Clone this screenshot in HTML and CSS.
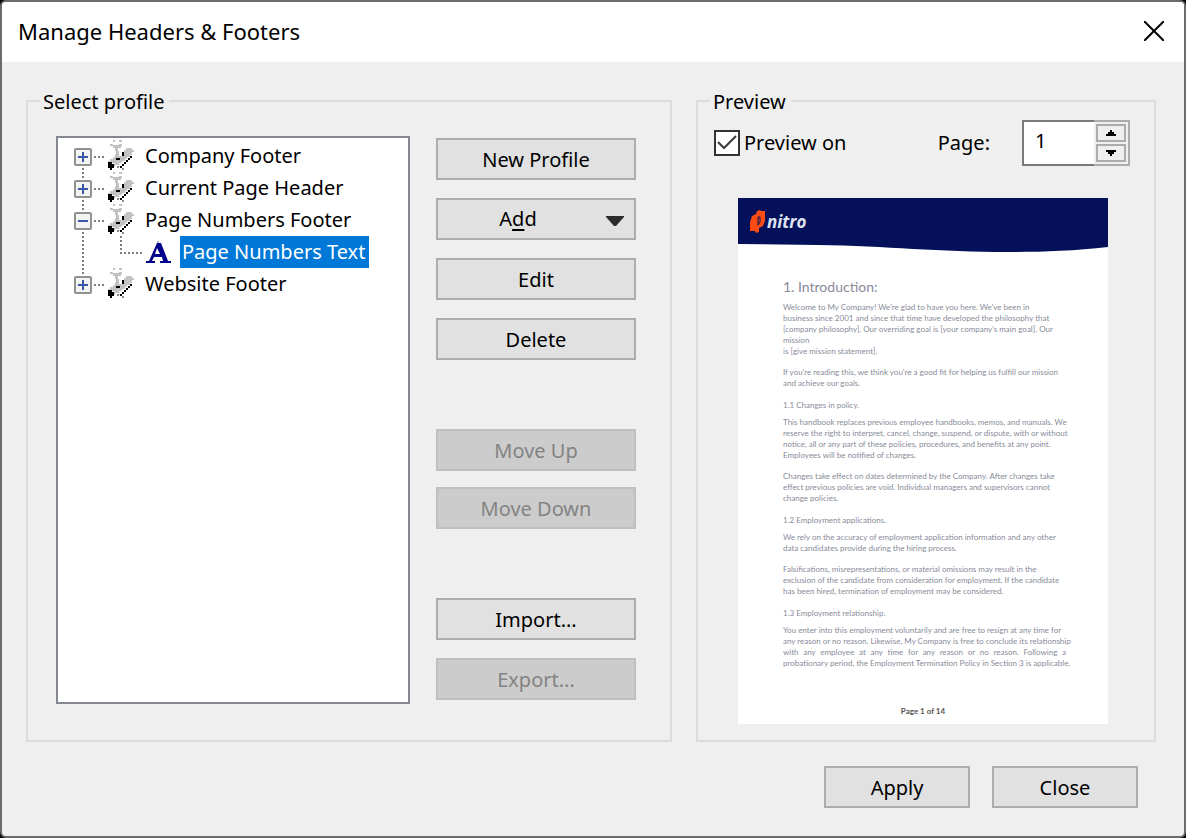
FILE: index.html
```html
<!DOCTYPE html>
<html lang="en">
<head>
<meta charset="utf-8">
<title>Manage Headers &amp; Footers</title>
<link rel="stylesheet" href="styles.css">
</head>
<body>
<svg class="defs" aria-hidden="true">
  <symbol id="stamp" viewBox="0 0 28 32">
    <path fill="#c2c2c2" d="M7 0h2v2H7zM13 0h3v2h-3zM4 4h3v1h6V4h3v2h-1v2h-3v3h1v5h3v-3h2v-3h2V8h6v2h2v2h-2v3h-2v2h-3v2h-2v2h-3v2h-3v2H9v2H8v-4H2v-2h2v-2h3v-2h2v-3h1v-3H9V8H7V6H4z"/>
    <path fill="#8a8a8a" d="M11 26h2v2h-2zM16 28h2v2h-2zM4 28h2v2H4z"/>
    <path fill="#000" d="M16 12h2v4h-2zM10 18h4v2h-4zM2 22h4v2h2v4H6v2H4v-2H2zM24 16h2v2h-2zM22 18h2v2h-2zM20 20h2v2h-2zM18 22h2v2h-2zM16 24h2v2h-2zM14 26h2v2h-2z"/>
  </symbol>
  <symbol id="box" viewBox="0 0 40 32">
    <path class="dots" d="M28 17h12"/>
    <rect x="9" y="9" width="16" height="16" rx="1" fill="#f3f3f3" stroke="#919191" stroke-width="2"/>
    <path d="M12 17h10" stroke="#3b57a5" stroke-width="2"/>
  </symbol>
</svg>
<div class="window">
  <header class="titlebar">
    <h1>Manage Headers &amp; Footers</h1>
    <button class="close" aria-label="Close window">
      <svg width="20" height="20" viewBox="0 0 20 20"><path d="M0 0l20 20M20 0L0 20" stroke="#000" stroke-width="2"/></svg>
    </button>
  </header>
  <main>
    <fieldset class="profiles">
      <legend>Select profile</legend>
      <div class="profile-body">
        <ul class="tree" role="tree">
          <li role="treeitem"><div class="row">
            <button class="toggle" aria-label="Expand Company Footer"><svg width="40" height="32"><path class="dots" d="M17 28v4"/><use href="#box"/><path d="M17 12v10" stroke="#3b57a5" stroke-width="2"/></svg></button>
            <svg class="stamp"><use href="#stamp"/></svg><span>Company Footer</span></div></li>
          <li role="treeitem"><div class="row">
            <button class="toggle" aria-label="Expand Current Page Header"><svg width="40" height="32"><path class="dots" d="M17 0v8M17 28v4"/><use href="#box"/><path d="M17 12v10" stroke="#3b57a5" stroke-width="2"/></svg></button>
            <svg class="stamp"><use href="#stamp"/></svg><span>Current Page Header</span></div></li>
          <li role="treeitem"><div class="row">
            <button class="toggle" aria-label="Collapse Page Numbers Footer"><svg width="40" height="32"><path class="dots" d="M17 0v8M17 28v4"/><use href="#box"/></svg></button>
            <svg class="stamp"><use href="#stamp"/></svg><span>Page Numbers Footer</span></div>
            <ul role="group">
              <li role="treeitem" aria-selected="true"><div class="row">
                <svg class="branch" width="78" height="32"><path class="dots" d="M17 0v32M55 0v16M54 17h24"/></svg>
                <svg class="letter" width="28" height="32" viewBox="0 0 28 32"><path fill="#00008b" d="M13 7h4l7 18h3v2H16v-2h3l-1-4h-8l-2 4h3v2H2v-2h3zM13 12l-2 6h5z" fill-rule="evenodd"/><path fill="#b4b4c4" d="M13 5h2v2h-2z"/></svg>
                <span class="selected">Page Numbers Text</span></div></li>
            </ul></li>
          <li role="treeitem"><div class="row">
            <button class="toggle" aria-label="Expand Website Footer"><svg width="40" height="32"><path class="dots" d="M17 0v8"/><use href="#box"/><path d="M17 12v10" stroke="#3b57a5" stroke-width="2"/></svg></button>
            <svg class="stamp"><use href="#stamp"/></svg><span>Website Footer</span></div></li>
        </ul>
        <div class="actions">
          <div class="group">
            <button class="btn">New Profile</button>
            <button class="btn add"><span>A<u>d</u>d</span><svg width="18" height="14" viewBox="0 0 18 14"><path d="M0 4h18v1l-8 9H8L0 5z" fill="#2b2b2b"/></svg></button>
            <button class="btn">Edit</button>
            <button class="btn">Delete</button>
          </div>
          <div class="group move">
            <button class="btn" disabled>Move Up</button>
            <button class="btn" disabled>Move Down</button>
          </div>
          <div class="group">
            <button class="btn">Import...</button>
            <button class="btn" disabled>Export...</button>
          </div>
        </div>
      </div>
    </fieldset>
    <fieldset class="preview">
      <legend>Preview</legend>
      <div class="options">
        <label class="check"><span class="tick"><input type="checkbox" checked><svg width="26" height="26" viewBox="0 0 26 26"><path d="M4 12l6 6L22 6" fill="none" stroke="#3a3a3a" stroke-width="2"/></svg></span>Preview on</label>
        <div class="pager">
          <label for="page">Page:</label>
          <div class="spin">
            <input id="page" type="text" value="1">
            <div class="steps">
              <button aria-label="Next page"><svg width="12" height="6" viewBox="0 0 12 6"><path d="M5 0h2v2h2v2h2v2H1V4h2V2h2z"/></svg></button>
              <button aria-label="Previous page"><svg width="12" height="6" viewBox="0 0 12 6"><path d="M5 6h2V4h2V2h2V0H1v2h2v2h2z"/></svg></button>
            </div>
          </div>
        </div>
      </div>
      <article class="sheet">
        <div class="banner">
          <svg class="wave" viewBox="0 0 370 56" preserveAspectRatio="none"><path fill="#04115a" d="M0 0h370v49C335 53 300 54 270 54 200 54 150 48 80 47L0 46z"/></svg>
          <div class="brand"><svg width="18" height="24" viewBox="0 0 18 24"><path fill="#fb4a12" d="M8 1l3-1 1 1h4v10l-2 5-4 2v4l-3 1-1-2H1V12l2-6 4-2z"/><path fill="none" stroke="#04115a" d="M9 7v8q3-2 2-8z"/></svg><span>nitro</span></div>
        </div>
        <div class="copy">
          <h2>1. Introduction:</h2>
          <p>Welcome to My Company! We're glad to have you here. We've been in<br>business since 2001 and since that time have developed the philosophy that<br>[company philosophy]. Our overriding goal is [your company's main goal]. Our<br>mission<br>is [give mission statement].</p>
          <p>If you're reading this, we think you're a good fit for helping us fulfill our mission<br>and achieve our goals.</p>
          <h3>1.1 Changes in policy.</h3>
          <p>This handbook replaces previous employee handbooks, memos, and manuals. We<br>reserve the right to interpret, cancel, change, suspend, or dispute, with or without<br>notice, all or any part of these policies, procedures, and benefits at any point.<br>Employees will be notified of changes.</p>
          <p>Changes take effect on dates determined by the Company. After changes take<br>effect previous policies are void. Individual managers and supervisors cannot<br>change policies.</p>
          <h3>1.2 Employment applications.</h3>
          <p>We rely on the accuracy of employment application information and any other<br>data candidates provide during the hiring process.</p>
          <p>Falsifications, misrepresentations, or material omissions may result in the<br>exclusion of the candidate from consideration for employment. If the candidate<br>has been hired, termination of employment may be considered.</p>
          <h3>1.3 Employment relationship.</h3>
          <p>You enter into this employment voluntarily and are free to resign at any time for<br>any reason or no reason. Likewise, My Company is free to conclude its relationship<span class="justified">with any employee at any time for any reason or no reason. Following a</span>probationary period, the Employment Termination Policy in Section 3 is applicable.</p>
        </div>
        <div class="folio">Page 1 of 14</div>
      </article>
    </fieldset>
  </main>
  <footer class="dialog-actions">
    <button class="btn">Apply</button>
    <button class="btn">Close</button>
  </footer>
</div>
</body>
</html>
```
FILE: styles.css
```css
* { box-sizing: border-box; }
body { margin: 0; background: #000; color: #000; font: 20px/28px "Noto Sans", "Open Sans", sans-serif; }
button, input { font: inherit; color: inherit; margin: 0; }
button { padding: 0; }
svg { display: block; flex: none; }
.defs { position: absolute; width: 0; height: 0; }
.window { min-height: 100vh; display: flex; flex-direction: column; background: #efefef; border: 2px solid #6b6b6b; border-radius: 6px; overflow: hidden; }
.titlebar { height: 60px; display: flex; align-items: center; justify-content: space-between; padding: 0 20px 3px 16px; background: #fff; }
.titlebar h1 { margin: 0; font-size: 22px; font-weight: 400; }
.close { border: 0; background: none; }
main { flex: 1; display: grid; grid-template-columns: 646fr 460fr; gap: 24px; padding: 24px 28px 24px 24px; }
fieldset { min-width: 0; margin: 0; border: 2px solid #dcdcdc; }
legend { padding: 2px 5px 0 3px; }
.profiles { padding: 20px 34px 36px 28px; }
.profiles legend { margin-left: -16px; }
.preview legend { margin-left: -4px; }
.profile-body { height: 100%; display: flex; gap: 26px; }
.tree { flex: 1; margin: 0; padding: 2px 0 0 8px; border: 2px solid #828790; background: #fff; list-style: none; }
.tree ul { margin: 0; padding: 0; list-style: none; }
.row { height: 32px; display: flex; align-items: center; white-space: nowrap; }
.row span { line-height: 32px; }
.toggle { border: 0; background: none; }
.stamp { width: 28px; height: 32px; margin-right: 11px; }
.letter { margin-right: 8px; }
.selected { padding: 0 4px 0 2px; background: #0078d7; color: #fff; }
.dots { stroke: #7d7d7d; stroke-width: 2; stroke-dasharray: 2 2; fill: none; }
.actions { width: 200px; padding: 2px 0 4px; display: flex; flex-direction: column; justify-content: space-between; }
.group { display: flex; flex-direction: column; gap: 18px; }
.move { gap: 16px; }
.btn { height: 42px; padding-top: 2px; border: 2px solid #adadad; background: #e1e1e1; }
.btn:disabled { background: #ccc; border-color: #bfbfbf; color: #838383; }
.add { display: grid; grid-template-columns: 1fr 18px; gap: 18px; align-items: center; padding: 0 10px; }
.add u { text-underline-offset: 3px; }
.preview { display: flex; flex-direction: column; padding: 4px 24px 16px 16px; }
.options { display: flex; align-items: center; justify-content: space-between; }
.check { display: flex; align-items: center; gap: 4px; }
.tick { display: grid; }
.tick > * { grid-area: 1 / 1; }
.tick input { appearance: none; width: 26px; height: 26px; border: 2px solid #333; background: #fff; }
.tick svg { pointer-events: none; z-index: 1; }
.pager { display: flex; align-items: center; gap: 32px; }
.spin { display: flex; width: 108px; height: 46px; }
.spin input { flex: 1; min-width: 0; padding: 0 0 4px 11px; border: 2px solid #7a7a7a; border-right: 0; border-radius: 0; background: #fff; }
.steps { width: 36px; display: flex; flex-direction: column; gap: 2px; padding: 2px; border: 2px solid #abadb3; border-left: 0; }
.steps button { flex: 1; display: grid; place-items: center; border: 2px solid #acacac; background: #efefef; }
.sheet { flex: 1; display: flex; flex-direction: column; margin: 32px 22px 0 24px; background: #fff; color: #888b99; font: 8px/11px Lato, "Open Sans", sans-serif; }
.banner { display: grid; height: 56px; }
.banner > * { grid-area: 1 / 1; }
.wave { width: 100%; height: 56px; }
.brand { z-index: 1; display: flex; align-items: center; align-self: start; padding: 12px 11px; color: #dfe3f0; font: italic 700 17px/22px "Open Sans", sans-serif; }
.copy { padding: 25px 42px 0 45px; white-space: nowrap; }
.copy h2 { margin: 0 0 8px; font-size: 14px; line-height: 15px; font-weight: 400; }
.copy h3 { margin: 11px 0 6px; font-size: 8px; font-weight: 400; }
.copy p { margin: 0 0 10px; }
.justified { display: block; text-align-last: justify; }
.folio { margin: auto 0 7px; text-align: center; color: #555; font-weight: 700; }
.dialog-actions { display: flex; justify-content: flex-end; gap: 22px; padding: 0 46px 28px; }
.dialog-actions .btn { width: 146px; }
```
